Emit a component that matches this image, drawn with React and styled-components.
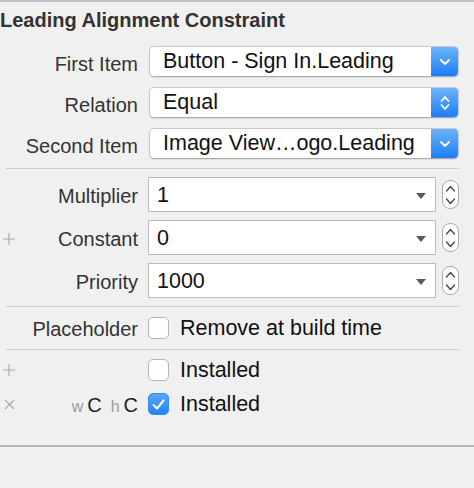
import React from "react";
import styled, { createGlobalStyle } from "styled-components";

const Global = createGlobalStyle`
  html, body { margin: 0; padding: 0; background: #f0f0f0; }
  body { font-family: "Liberation Sans", Arial, Helvetica, sans-serif; }
  * { box-sizing: border-box; }
`;

const Panel = styled.div`
  width: 474px;
  height: 488px;
  background: #f0f0f0;
  border-top: 2px solid #c2c2c2;
  padding-top: 6px;
  display: flex;
  flex-direction: column;
`;

const Title = styled.div`
  font-size: 20px;
  line-height: 24px;
  font-weight: bold;
  color: #353230;
  white-space: nowrap;
  margin-bottom: 14px;
`;

const Section = styled.div`
  display: flex;
  flex-direction: column;
  gap: ${(p) => p.$gap || 0}px;
  padding-right: 15px;
`;

const Row = styled.div`
  display: grid;
  grid-template-columns: 138px 1fr;
  column-gap: 10px;
  align-items: center;
  height: ${(p) => p.$h}px;
`;

const LabelCell = styled.div`
  display: flex;
  align-items: center;
  height: 100%;
  padding-left: 3px;
`;

const Gutter = styled.span`
  width: 12px;
  height: 12px;
  display: flex;
  align-items: center;
  justify-content: center;
  margin-top: ${(p) => p.$dy || 0}px;
`;

const Label = styled.span`
  margin-left: auto;
  font-size: 20px;
  color: #333;
  white-space: nowrap;
  padding-top: ${(p) => p.$dy || 0}px;
`;

const Separator = styled.div`
  height: 1px;
  background: #cdcdcd;
  margin: ${(p) => p.$m || "0 15px 0 6px"};
`;

const BottomRule = styled.div`
  height: 2px;
  background: #b9b9b9;
  margin-top: 24px;
`;

const Popup = styled.div`
  display: flex;
  height: 31px;
  background: #fff;
  border: 1px solid #c8c8c8;
  border-bottom-color: #ababab;
  border-radius: 5px;
  overflow: hidden;
  box-shadow: 0 1px 1px rgba(0, 0, 0, 0.08);
  margin-left: 1px;
`;

const PopupValue = styled.span`
  flex: 1;
  padding-left: 13px;
  font-size: 21.5px;
  line-height: 29px;
  color: #111;
  white-space: nowrap;
  overflow: hidden;
`;

const PopupArrow = styled.span`
  width: 27px;
  background: linear-gradient(#6db3fa, #1b7ef8);
  display: flex;
  align-items: center;
  justify-content: center;
`;

const FieldGroup = styled.div`
  display: flex;
  align-items: center;
  gap: 6px;
`;

const Field = styled.div`
  flex: 1;
  height: 35px;
  background: #fff;
  border: 1px solid #bcbcbc;
  display: flex;
  align-items: center;
  padding: 2px 9px 0 8px;
  font-size: 21.5px;
  color: #111;
`;

const FieldText = styled.span`
  flex: 1;
`;

const Triangle = styled.span`
  width: 0;
  height: 0;
  border-left: 5.5px solid transparent;
  border-right: 5.5px solid transparent;
  border-top: 6px solid #595959;
`;

const StepperBox = styled.span`
  width: 17px;
  height: 29px;
  border: 1px solid #ababab;
  border-radius: 8px;
  background: #fff;
  display: flex;
  align-items: center;
  justify-content: center;
`;

const CheckRow = styled.div`
  display: flex;
  align-items: center;
  gap: 11px;
`;

const Box = styled.span`
  width: 21px;
  height: 22px;
  border-radius: 5px;
  border: 1px solid ${(p) => (p.$on ? "#2f8cf8" : "#b5b5b5")};
  background: ${(p) => (p.$on ? "linear-gradient(#5aa7fb, #2482f8)" : "#fff")};
  display: flex;
  align-items: center;
  justify-content: center;
`;

const CheckText = styled.span`
  font-size: 21.5px;
  color: #111;
  white-space: nowrap;
`;

const SizeClass = styled.span`
  margin-left: auto;
  display: flex;
  align-items: baseline;
  gap: 9px;
  padding-top: 2px;
`;

const SizePart = styled.span`
  display: flex;
  align-items: baseline;
  gap: 4px;
  font-size: 20px;
  color: #1e1e1e;
`;

const Small = styled.span`
  font-size: 16px;
  color: #9a9a9a;
`;

const Chevron = ({ up }) => (
  <svg width="10" height="6" viewBox="0 0 10 6">
    <path
      d={up ? "M1 5 L5 1 L9 5" : "M1 1 L5 5 L9 1"}
      fill="none"
      stroke="#fff"
      strokeWidth="1.8"
      strokeLinecap="round"
      strokeLinejoin="round"
    />
  </svg>
);

const DoubleChevron = () => (
  <svg width="10" height="16" viewBox="0 0 10 16">
    <path d="M1.5 6 L5 2 L8.5 6" fill="none" stroke="#fff" strokeWidth="1.7" strokeLinecap="round" strokeLinejoin="round" />
    <path d="M1.5 10 L5 14 L8.5 10" fill="none" stroke="#fff" strokeWidth="1.7" strokeLinecap="round" strokeLinejoin="round" />
  </svg>
);

const StepGlyph = () => (
  <svg width="11" height="22" viewBox="0 0 11 22">
    <path d="M1.5 7 L5.5 2.5 L9.5 7" fill="none" stroke="#444" strokeWidth="1.3" strokeLinecap="round" strokeLinejoin="round" />
    <path d="M1.5 15 L5.5 19.5 L9.5 15" fill="none" stroke="#444" strokeWidth="1.3" strokeLinecap="round" strokeLinejoin="round" />
  </svg>
);

const Plus = () => (
  <svg width="12" height="12" viewBox="0 0 12 12">
    <path d="M6 0 V12 M0 6 H12" stroke="#a9a9a9" strokeWidth="1.1" />
  </svg>
);

const Cross = () => (
  <svg width="11" height="11" viewBox="0 0 11 11">
    <path d="M1 1 L10 10 M10 1 L1 10" stroke="#a9a9a9" strokeWidth="1.2" />
  </svg>
);

const Tick = () => (
  <svg width="13" height="11" viewBox="0 0 13 11">
    <path d="M1.5 6 L5 9.5 L11.5 1.5" fill="none" stroke="#fff" strokeWidth="2" strokeLinecap="round" strokeLinejoin="round" />
  </svg>
);

const PopupRow = ({ label, value, double }) => (
  <Row $h={31}>
    <LabelCell>
      <Label $dy={5}>{label}</Label>
    </LabelCell>
    <Popup>
      <PopupValue>{value}</PopupValue>
      <PopupArrow>{double ? <DoubleChevron /> : <Chevron />}</PopupArrow>
    </Popup>
  </Row>
);

const FieldRow = ({ label, value, gutter }) => (
  <Row $h={35}>
    <LabelCell>
      {gutter && <Gutter $dy={2}>{gutter}</Gutter>}
      <Label $dy={3}>{label}</Label>
    </LabelCell>
    <FieldGroup>
      <Field>
        <FieldText>{value}</FieldText>
        <Triangle />
      </Field>
      <StepperBox>
        <StepGlyph />
      </StepperBox>
    </FieldGroup>
  </Row>
);

export default function App() {
  return (
    <>
      <Global />
      <Panel>
        <Title>Leading Alignment Constraint</Title>
        <Section $gap={10}>
          <PopupRow label="First Item" value="Button - Sign In.Leading" />
          <PopupRow label="Relation" value="Equal" double />
          <PopupRow label="Second Item" value="Image View…ogo.Leading" />
        </Section>
        <Separator $m="9px 15px 8px 6px" />
        <Section $gap={8}>
          <FieldRow label="Multiplier" value="1" />
          <FieldRow label="Constant" value="0" gutter={<Plus />} />
          <FieldRow label="Priority" value="1000" />
        </Section>
        <Separator $m="8px 15px 0 6px" />
        <Section>
          <Row $h={42}>
            <LabelCell>
              <Label $dy={2}>Placeholder</Label>
            </LabelCell>
            <CheckRow>
              <Box />
              <CheckText>Remove at build time</CheckText>
            </CheckRow>
          </Row>
        </Section>
        <Separator $m="0 15px 3px 6px" />
        <Section>
          <Row $h={34}>
            <LabelCell>
              <Gutter>
                <Plus />
              </Gutter>
            </LabelCell>
            <CheckRow>
              <Box />
              <CheckText>Installed</CheckText>
            </CheckRow>
          </Row>
          <Row $h={34}>
            <LabelCell>
              <Gutter>
                <Cross />
              </Gutter>
              <SizeClass>
                <SizePart>
                  <Small>w</Small>C
                </SizePart>
                <SizePart>
                  <Small>h</Small>C
                </SizePart>
              </SizeClass>
            </LabelCell>
            <CheckRow>
              <Box $on>
                <Tick />
              </Box>
              <CheckText>Installed</CheckText>
            </CheckRow>
          </Row>
        </Section>
        <BottomRule />
      </Panel>
    </>
  );
}
